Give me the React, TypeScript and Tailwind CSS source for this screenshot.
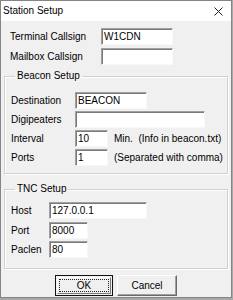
import React from 'react'

const font = { fontFamily: '"Liberation Sans", Arial, sans-serif' }

const boxClass =
  'h-[17px] bg-white border border-t-[#a0a0a0] border-l-[#a0a0a0] border-r-[#f8f8f8] border-b-[#f8f8f8] shadow-[inset_1px_1px_0_#7a7a7a] pl-[2px] flex items-center text-[10px] leading-none text-black'

function TextBox({ value = '', w }: { value?: string; w: string }) {
  return <div className={`${boxClass} ${w}`}>{value}</div>
}

function Row({ label, labelW, children, className = '' }: {
  label:     string
  labelW:    string
  children:  React.ReactNode
  className?: string
}) {
  return (
    <div className={`flex items-center h-[17px] ${className}`}>
      <span className={`${labelW} shrink-0 text-[10px] leading-none text-black`}>{label}</span>
      {children}
    </div>
  )
}

function Group({ title, children, className = '' }: {
  title:      string
  children:   React.ReactNode
  className?: string
}) {
  return (
    <fieldset
      className={`ml-[3px] w-[224px] border border-[#d0d0d0] shadow-[inset_1px_1px_0_#fff,1px_1px_0_#fff] pl-[6px] ${className}`}
    >
      <legend className="ml-[4px] px-[2px] h-[12px] text-[10px] leading-[12px] text-black">{title}</legend>
      {children}
    </fieldset>
  )
}

export default function App() {
  return (
    <div style={font} className="w-[233px] h-[300px] bg-[#a9a9a9] overflow-hidden">
      <div className="w-[232px] h-[298px] border border-[#858585] bg-[#f0f0f0] flex flex-col">
        {/* title bar */}
        <div className="h-[20px] bg-white flex items-center justify-between pl-[2px] pr-[8px]">
          <span className="text-[10px] leading-none text-black">Station Setup</span>
          <svg width="9" height="9" viewBox="0 0 9 9" className="mt-[1px]">
            <path d="M0.5 0.5 L8.5 8.5 M8.5 0.5 L0.5 8.5" stroke="#222" strokeWidth="1" />
          </svg>
        </div>

        <div className="pt-[7px] pl-[9px]">
          <Row label="Terminal Callsign" labelW="w-[91px]">
            <TextBox value="W1CDN" w="w-[72px]" />
          </Row>
          <Row label="Mailbox Callsign" labelW="w-[91px]" className="mt-[3px]">
            <TextBox w="w-[72px]" />
          </Row>
        </div>

        <Group title="Beacon Setup" className="mt-[5px] pb-[7px]">
          <Row label="Destination" labelW="w-[64px]" className="mt-[10px]">
            <TextBox value="BEACON" w="w-[72px]" />
          </Row>
          <Row label="Digipeaters" labelW="w-[64px]" className="mt-[2px]">
            <TextBox w="w-[130px]" />
          </Row>
          <Row label="Interval" labelW="w-[64px]" className="mt-[2px]">
            <TextBox value="10" w="w-[33px]" />
            <span className="ml-[6px] text-[10px] leading-none text-black whitespace-pre">Min.  (Info in beacon.txt)</span>
          </Row>
          <Row label="Ports" labelW="w-[64px]" className="mt-[2px]">
            <TextBox value="1" w="w-[33px]" />
            <span className="ml-[6px] text-[10px] leading-none text-black">(Separated with comma)</span>
          </Row>
        </Group>

        <Group title="TNC Setup" className="mt-[9px] pb-[10px]">
          <Row label="Host" labelW="w-[38px]" className="mt-[7px]">
            <TextBox value="127.0.0.1" w="w-[98px]" />
          </Row>
          <Row label="Port" labelW="w-[38px]" className="mt-[3px]">
            <TextBox value="8000" w="w-[39px]" />
          </Row>
          <Row label="Paclen" labelW="w-[38px]" className="mt-[2px]">
            <TextBox value="80" w="w-[39px]" />
          </Row>
        </Group>

        <div className="mt-[6px] flex justify-center gap-[4px]">
          <button className="w-[58px] h-[21px] border border-[#111] bg-[#f0f0f0] p-[1px] text-[10px] text-black">
            <div className="h-full border border-t-white border-l-white border-r-[#7a7a7a] border-b-[#7a7a7a] p-[1px]">
              <div className="h-full border border-dotted border-[#222] flex items-center justify-center leading-none">OK</div>
            </div>
          </button>
          <button className="w-[60px] h-[21px] border border-t-white border-l-white border-r-[#696969] border-b-[#696969] bg-[#f0f0f0] shadow-[inset_-1px_-1px_0_#a0a0a0] text-[10px] leading-none text-black flex items-center justify-center">
            Cancel
          </button>
        </div>
      </div>
    </div>
  )
}
